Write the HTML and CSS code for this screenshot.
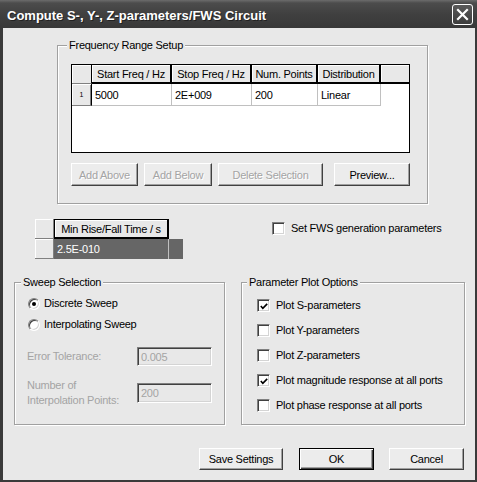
FILE: index.html
```html
<!DOCTYPE html>
<html>
<head>
<meta charset="utf-8">
<link rel="stylesheet" href="styles.css">
</head>
<body>
<div class="window">
  <div class="titlebar">
    <span class="title">Compute S-, Y-, Z-parameters/FWS Circuit</span>
    <span class="close"><svg width="13" height="13" viewBox="0 0 13 13"><path d="M2 2 L11 11 M11 2 L2 11" stroke="#fff" stroke-width="2.2" stroke-linecap="square"/></svg></span>
  </div>
  <div class="client">
    <div class="group freq">
      <span class="gtitle">Frequency Range Setup</span>
      <div class="ftable">
        <div class="corner"></div>
        <div class="hc">Start Freq / Hz</div>
        <div class="hc">Stop Freq / Hz</div>
        <div class="hc">Num. Points</div>
        <div class="hc">Distribution</div>
        <div class="hc hc-empty"></div>
        <div class="rh"><span class="rhnum">1</span></div>
        <div class="dc">5000</div>
        <div class="dc">2E+009</div>
        <div class="dc">200</div>
        <div class="dc">Linear</div>
        <div class="dc dc-empty"></div>
      </div>
      <div class="btnrow">
        <span class="btn disabled b-above">Add Above</span>
        <span class="btn disabled b-below">Add Below</span>
        <span class="btn disabled b-delete">Delete Selection</span>
        <span class="btn b-preview">Preview...</span>
      </div>
    </div>

    <div class="midrow">
      <div class="rtable">
        <div class="rcorner"></div>
        <div class="rhc">Min Rise/Fall Time / s</div>
        <div class="rhc-empty"></div>
        <div class="rrh"></div>
        <div class="rdc">2.5E-010</div>
        <div class="rdc-empty"></div>
      </div>
      <div class="check fws"><span class="box"></span><span>Set FWS generation parameters</span></div>
    </div>

    <div class="grouprow">
      <div class="group sweep">
        <span class="gtitle">Sweep Selection</span>
        <div class="radio r1"><span class="circle on"></span><span>Discrete Sweep</span></div>
        <div class="radio r2"><span class="circle"></span><span>Interpolating Sweep</span></div>
        <div class="field f1"><span class="flabel">Error Tolerance:</span><span class="input">0.005</span></div>
        <div class="field f2"><span class="flabel two">Number of<br>Interpolation Points:</span><span class="input tall">200</span></div>
      </div>
      <div class="group plot">
        <span class="gtitle">Parameter Plot Options</span>
        <div class="check c1"><span class="box"><svg width="11" height="11" viewBox="0 0 11 11"><path d="M2 5 L4.2 7.4 L9 2.6" fill="none" stroke="#000" stroke-width="1.8"/></svg></span><span>Plot S-parameters</span></div>
        <div class="check cn"><span class="box"></span><span>Plot Y-parameters</span></div>
        <div class="check cn"><span class="box"></span><span>Plot Z-parameters</span></div>
        <div class="check cn"><span class="box"><svg width="11" height="11" viewBox="0 0 11 11"><path d="M2 5 L4.2 7.4 L9 2.6" fill="none" stroke="#000" stroke-width="1.8"/></svg></span><span>Plot magnitude response at all ports</span></div>
        <div class="check cn"><span class="box"></span><span>Plot phase response at all ports</span></div>
      </div>
    </div>

    <div class="bottomrow">
      <span class="btn b-save">Save Settings</span>
      <span class="btn default b-ok">OK</span>
      <span class="btn b-cancel">Cancel</span>
    </div>
  </div>
</div>
</body>
</html>
```
FILE: styles.css
```css
html, body {
  margin: 0;
  padding: 0;
  background: #3a3a3a;
}
* { box-sizing: border-box; }

.window {
  width: 477px;
  height: 482px;
  background: #3a3a3a;
  display: flex;
  flex-direction: column;
  font-family: "Liberation Sans", Arial, sans-serif;
  font-size: 11px;
  letter-spacing: -0.25px;
  color: #000;
}

.titlebar {
  height: 28px;
  flex: none;
  display: flex;
  align-items: center;
  justify-content: space-between;
  padding: 0 4px 0 7px;
  background: linear-gradient(to bottom, #6c6c6c 0, #4c4c4c 3px, #404040 50%, #383838 100%);
}
.title {
  color: #fff;
  font-weight: bold;
  font-size: 13px;
  letter-spacing: 0;
  text-shadow: 1px 1px 0 #222;
  padding-top: 2px;
}
.close {
  width: 21px;
  height: 21px;
  border: 1px solid #fff;
  border-radius: 3px;
  background: linear-gradient(to bottom, #5a5a5a, #3c3c3c);
  display: flex;
  align-items: center;
  justify-content: center;
  margin-top: 1px;
}

.client {
  flex: 1;
  margin: 0 2px 2px 3px;
  background: #e8e8e8;
  display: flex;
  flex-direction: column;
  align-items: flex-start;
}

/* group boxes */
.group {
  border: 1px solid #a0a0a0;
  box-shadow: 1px 1px 0 #fff, inset 1px 1px 0 #fff;
  display: flex;
  flex-direction: column;
  align-items: flex-start;
}
.gtitle {
  display: block;
  height: 13px;
  line-height: 13px;
  margin-top: -7px;
  padding: 0 2px;
  background: #e8e8e8;
  white-space: nowrap;
}

.freq {
  margin-left: 54px;
  margin-top: 17px;
  width: 371px;
  height: 159px;
}
.freq .gtitle { margin-left: 9px; }

/* frequency table */
.ftable {
  margin-left: 13px;
  margin-top: 12px;
  width: 339px;
  height: 89px;
  border: 1px solid #000;
  background: #fff;
  display: grid;
  grid-template-columns: 20px 80px 80px 66px 63px 1fr;
  grid-template-rows: 19px 22px 1fr;
}
.corner {
  background: #e8e8e8;
  border-right: 1px solid #000;
  border-bottom: 1px solid #808080;
  box-shadow: inset 1px 1px 0 #fff;
}
.hc {
  background: #e8e8e8;
  border-right: 2px solid #000;
  border-bottom: 2px solid #000;
  box-shadow: inset 1px 1px 0 #fff;
  display: flex;
  align-items: center;
  justify-content: center;
  white-space: nowrap;
  padding-top: 1px;
}
.hc-empty { border-right: none; }
.rh {
  background: #e8e8e8;
  border-right: 1px solid #000;
  border-bottom: 1px solid #808080;
  box-shadow: inset 1px 1px 0 #fff, inset -1px 0 0 #808080;
  display: flex;
  align-items: center;
  justify-content: center;
}
.rhnum { font-size: 7px; letter-spacing: 0; }
.dc {
  border-right: 1px solid #c0c0c0;
  border-bottom: 1px solid #c0c0c0;
  padding-left: 3px;
  display: flex;
  align-items: center;
  white-space: nowrap;
}
.dc-empty { border: none; }

/* buttons */
.btn {
  display: flex;
  align-items: center;
  justify-content: center;
  height: 23px;
  background: #ececec;
  border: 1px solid;
  border-color: #fff #404040 #404040 #fff;
  box-shadow: inset -1px -1px 0 #a0a0a0;
  white-space: nowrap;
}
.btn.disabled {
  color: #a4a4a4;
  text-shadow: 1px 1px 0 #fff;
}
.btn.default {
  border: 1px solid #000;
  box-shadow: inset 1px 1px 0 #fff, inset -1px -1px 0 #404040, inset -2px -2px 0 #a0a0a0;
}
.btnrow {
  margin-left: 13px;
  margin-top: 10px;
  display: flex;
}
.b-above { width: 67px; }
.b-below { width: 68px; margin-left: 6px; }
.b-delete { width: 105px; margin-left: 6px; }
.b-preview { width: 76px; margin-left: 11px; }

/* middle row */
.midrow {
  margin-top: 15px;
  display: flex;
  align-items: flex-start;
}
.rtable {
  margin-left: 32px;
  width: 148px;
  height: 40px;
  display: grid;
  grid-template-columns: 19px 115px 14px;
  grid-template-rows: 20px 20px;
}
.rcorner, .rrh {
  background: #e8e8e8;
  border-right: 1px solid #808080;
  border-bottom: 1px solid #808080;
  box-shadow: inset 1px 1px 0 #fff;
}
.rhc {
  background: #e8e8e8;
  border-top: 1px solid #000;
  border-left: 1px solid #000;
  border-right: 2px solid #000;
  border-bottom: 2px solid #000;
  box-shadow: inset 1px 1px 0 #fff;
  display: flex;
  align-items: center;
  justify-content: center;
  white-space: nowrap;
}
.rhc-empty {
  background: #e8e8e8;
}
.rdc {
  background: #666;
  color: #fff;
  border-right: 1px solid #c0c0c0;
  padding-left: 3px;
  display: flex;
  align-items: center;
  white-space: nowrap;
}
.rdc-empty { background: #666; }

/* checkboxes */
.check {
  display: flex;
  align-items: center;
  height: 13px;
  line-height: 13px;
  white-space: nowrap;
}
.box {
  width: 13px;
  height: 13px;
  flex: none;
  background: #fff;
  border: 1px solid;
  border-color: #808080 #fff #fff #808080;
  box-shadow: inset 1px 1px 0 #404040, inset -1px -1px 0 #d4d4d4;
  margin-right: 6px;
  display: flex;
  align-items: center;
  justify-content: center;
}
.box svg { display: block; margin-left: 1px; margin-top: 1px; }
.fws {
  margin-left: 89px;
  margin-top: 3px;
}

/* lower groups */
.grouprow {
  margin-top: 23px;
  margin-left: 11px;
  display: flex;
  align-items: flex-start;
}
.sweep {
  width: 211px;
  height: 143px;
}
.sweep .gtitle { margin-left: 6px; }
.plot {
  margin-left: 16px;
  width: 224px;
  height: 143px;
}
.plot .gtitle { margin-left: 5px; }

.radio {
  display: flex;
  align-items: center;
  height: 13px;
  line-height: 13px;
  margin-left: 13px;
  white-space: nowrap;
}
.r1 { margin-top: 8px; }
.r2 { margin-top: 8px; }
.circle {
  width: 12px;
  height: 12px;
  flex: none;
  border-radius: 50%;
  background: #fff;
  border: 1px solid;
  border-color: #808080 #fff #fff #808080;
  box-shadow: inset 1px 1px 0 #404040, inset -1px -1px 0 #d4d4d4;
  margin-right: 4px;
  display: flex;
  align-items: center;
  justify-content: center;
}
.circle.on::after {
  content: "";
  width: 4px;
  height: 4px;
  border-radius: 50%;
  background: #000;
}

.field {
  display: flex;
  align-items: center;
  margin-left: 12px;
  color: #a4a4a4;
}
.f1 { margin-top: 16px; }
.f2 { margin-top: 12px; }
.flabel {
  width: 110px;
  line-height: 13px;
  white-space: nowrap;
}
.flabel.two { line-height: 15px; }
.input {
  width: 75px;
  height: 19px;
  background: #e8e8e8;
  border: 1px solid;
  border-color: #808080 #fff #fff #808080;
  box-shadow: inset 1px 1px 0 #404040, inset -1px -1px 0 #d4d4d4;
  padding-left: 3px;
  display: flex;
  align-items: center;
  color: #a4a4a4;
}
.input.tall { height: 20px; }

.plot .check { margin-left: 15px; }
.c1 { margin-top: 10px; }
.cn { margin-top: 12px; }
.plot .box { margin-right: 6px; }

/* bottom buttons */
.bottomrow {
  margin-top: 23px;
  margin-left: 196px;
  display: flex;
}
.bottomrow .btn { height: 22px; }
.b-save { width: 84px; }
.b-ok { width: 75px; margin-left: 16px; }
.b-cancel { width: 75px; margin-left: 15px; }
```
